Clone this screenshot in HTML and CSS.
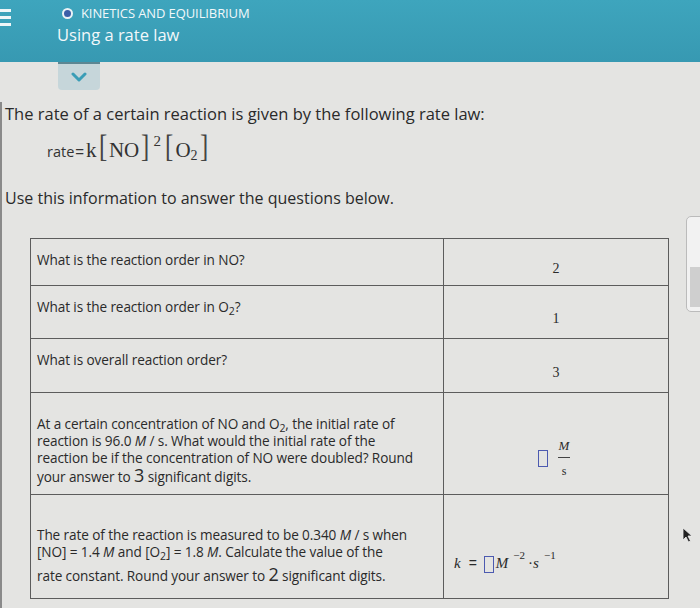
FILE: index.html
```html
<!DOCTYPE html>
<html>
<head>
<meta charset="utf-8">
<link rel="stylesheet" href="styles.css">
</head>
<body>
<header class="top">
  <div class="burger"><span></span><span></span><span></span></div>
  <div class="titles">
    <div class="topic"><span class="dot"></span>KINETICS AND EQUILIBRIUM</div>
    <div class="lesson">Using a rate law</div>
  </div>
</header>
<div class="tabrow">
  <div class="tab">
    <svg width="16" height="10" viewBox="0 0 16 10"><path d="M2 2 L8 8 L14 2" fill="none" stroke="#3a9db6" stroke-width="3" stroke-linecap="round" stroke-linejoin="round"/></svg>
  </div>
</div>
<main class="content">
  <p class="intro">The rate of a certain reaction is given by the following rate law:</p>
  <div class="formula">
    <span class="rate">rate</span><span class="eq">=</span><span class="k">k</span><span class="br">[</span><span class="sp">NO</span><span class="br">]</span><sup class="exp">2</sup><span class="br">[</span><span class="sp">O<sub>2</sub></span><span class="br">]</span>
  </div>
  <p class="use">Use this information to answer the questions below.</p>

  <table class="qs">
    <tr class="r1">
      <td class="q">What is the reaction order in NO?</td>
      <td class="a"><span class="num">2</span></td>
    </tr>
    <tr class="r2">
      <td class="q">What is the reaction order in O<sub>2</sub>?</td>
      <td class="a"><span class="num">1</span></td>
    </tr>
    <tr class="r3">
      <td class="q">What is overall reaction order?</td>
      <td class="a"><span class="num">3</span></td>
    </tr>
    <tr class="r4">
      <td class="q long">At a certain concentration of NO and O<sub>2</sub>, the initial rate of reaction is 96.0 <i>M</i> / s. What would the initial rate of the reaction be if the concentration of NO were doubled? Round your answer to <span class="big">3</span> significant digits.</td>
      <td class="a">
        <span class="ans1"><span class="box"></span><span class="frac"><span class="fm">M</span><span class="fs">s</span></span></span>
      </td>
    </tr>
    <tr class="r5">
      <td class="q long">The rate of the reaction is measured to be 0.340 <i>M</i> / s when [NO] = 1.4 <i>M</i> and [O<sub>2</sub>] = 1.8 <i>M</i>. Calculate the value of the rate constant. Round your answer to <span class="big">2</span> significant digits.</td>
      <td class="a left">
        <span class="ans2"><i class="kk">k</i><span class="keq">=</span><span class="box"></span><i class="mm">M</i><sup>&minus;2</sup><span class="cdot">&middot;</span><i class="ss">s</i><sup>&minus;1</sup></span>
      </td>
    </tr>
  </table>
</main>
<div class="scroller"><div class="thumb"></div></div>
<svg class="cursor" width="12" height="16" viewBox="0 0 12 16"><path d="M1 1 L1 13 L4 10 L6.5 15 L8.5 14 L6 9 L10 9 Z" fill="#222" stroke="#eee" stroke-width="0.8"/></svg>
</body>
</html>
```
FILE: styles.css
```css
* { box-sizing: border-box; }
html, body {
  margin: 0;
  padding: 0;
  width: 700px;
  height: 608px;
  overflow: hidden;
  background: #e4e4e2;
  font-family: "Open Sans", "DejaVu Sans", sans-serif;
  color: #2a2a2a;
  position: relative;
}
.top {
  height: 62px;
  background: linear-gradient(#3ea5bd, #3799b2);
  display: flex;
  align-items: flex-start;
}
.burger {
  width: 57px;
  padding-top: 9px;
  display: flex;
  flex-direction: column;
  gap: 4px;
}
.burger span {
  display: block;
  width: 11px;
  height: 3px;
  background: #eef6f8;
}
.titles { padding-top: 4px; color: #f2f8fa; }
.topic {
  font-size: 13px;
  display: flex;
  align-items: center;
  letter-spacing: -0.1px;
  margin-left: 1px;
}
.dot {
  width: 11px;
  height: 11px;
  border-radius: 50%;
  border: 2px solid #eaf2f6;
  background: #3b5ea8;
  margin: 0 8px 0 4px;
}
.lesson {
  font-size: 16.5px;
  margin-top: 1px;
}
.tabrow { height: 28px; padding-left: 58px; }
.tab {
  width: 42px;
  height: 28px;
  background: #c6d6da;
  border-top: 2px solid #5d8692;
  border-radius: 0 0 4px 4px;
  display: flex;
  justify-content: center;
  align-items: center;
}
.content {
  border-left: 2px solid #8a8a8a;
  padding-left: 3px;
  height: 520px;
}
.intro {
  margin: 12px 0 0 0;
  font-size: 16.5px;
}
.formula {
  margin: 6px 0 0 42px;
  height: 36px;
  display: flex;
  align-items: baseline;
  font-family: "Liberation Serif", serif;
  font-size: 21px;
  color: #333;
}
.formula .rate { font-family: "Open Sans", sans-serif; font-size: 14.5px; }
.formula .eq { font-family: "Liberation Sans", sans-serif; font-size: 15px; margin: 0 2px 0 1px; }
.formula .br { font-size: 31px; font-weight: 100; line-height: 1; transform: scaleX(0.8); color: #444; margin: 0 1px; }
.formula .exp { font-size: 15px; position: relative; top: -11px; vertical-align: baseline; margin: 0 2px; }
.formula sub { font-size: 14px; vertical-align: -3px; }
.use {
  margin: 20px 0 0 0;
  font-size: 16px;
}
.qs {
  margin: 29px 0 0 25px;
  border-collapse: collapse;
  width: 639px;
  font-size: 13.6px;
}
.qs td {
  border: 1px solid #5c5c5c;
  vertical-align: top;
  padding: 0;
}
.qs td.q {
  width: 413px;
  padding: 11px 8px 0 6px;
  letter-spacing: -0.1px;
}
.qs td.q.long { line-height: 17px; padding-right: 18px; }
.r4 td.q.long { padding-top: 22px; }
.r5 td.q.long { padding-top: 31px; padding-right: 32px; }
.r5 .big { line-height: 29px; }
.qs td.a {
  text-align: center;
  vertical-align: middle;
  font-family: "Liberation Serif", serif;
  font-size: 14px;
}
.qs td.a.left { text-align: left; padding-left: 10px; }
.qs sub { font-size: 10.5px; vertical-align: -3px; line-height: 0; }
.r1 { height: 47px; }
.r2 { height: 53px; }
.r3 { height: 54px; }
.r4 { height: 102px; }
.r5 { height: 104px; }
.r1 .num, .r2 .num, .r3 .num { position: relative; top: 7px; }
.big { font-size: 18px; line-height: 1; }
.box {
  display: inline-block;
  width: 10px;
  height: 17px;
  border: 1.5px solid #4c5ab0;
  vertical-align: middle;
}
.ans1 {
  display: inline-flex;
  align-items: center;
  gap: 10px;
  margin-right: 4px;
  position: relative;
  top: 15px;
}
.frac { display: inline-flex; flex-direction: column; align-items: center; font-size: 13px; line-height: 15px; }
.fm { font-style: italic; border-bottom: 1px solid #444; padding: 0 1px 4px; }
.fs { padding-top: 6px; font-size: 12px; }
.ans2 {
  display: inline-block;
  position: relative;
  top: 16px;
  font-size: 15px;
}
.ans2 .keq { margin: 0 7px 0 8px; font-family: "Liberation Sans", sans-serif; font-size: 14px; }
.ans2 .box { margin-right: 2px; }
.ans2 sup { font-size: 11px; margin: 0 5px 0 5px; position: relative; top: -3px; }
.cdot { margin-left: -2px; }
.scroller {
  position: absolute;
  left: 686px;
  top: 216px;
  width: 20px;
  height: 96px;
  border: 1.5px solid #bbb;
  border-radius: 5px;
  background: #f2f2f2;
  padding: 50px 0 0 3px;
}
.thumb { width: 14px; height: 40px; background: #cfcfcf; }
.cursor { position: absolute; left: 682px; top: 527px; }
```
